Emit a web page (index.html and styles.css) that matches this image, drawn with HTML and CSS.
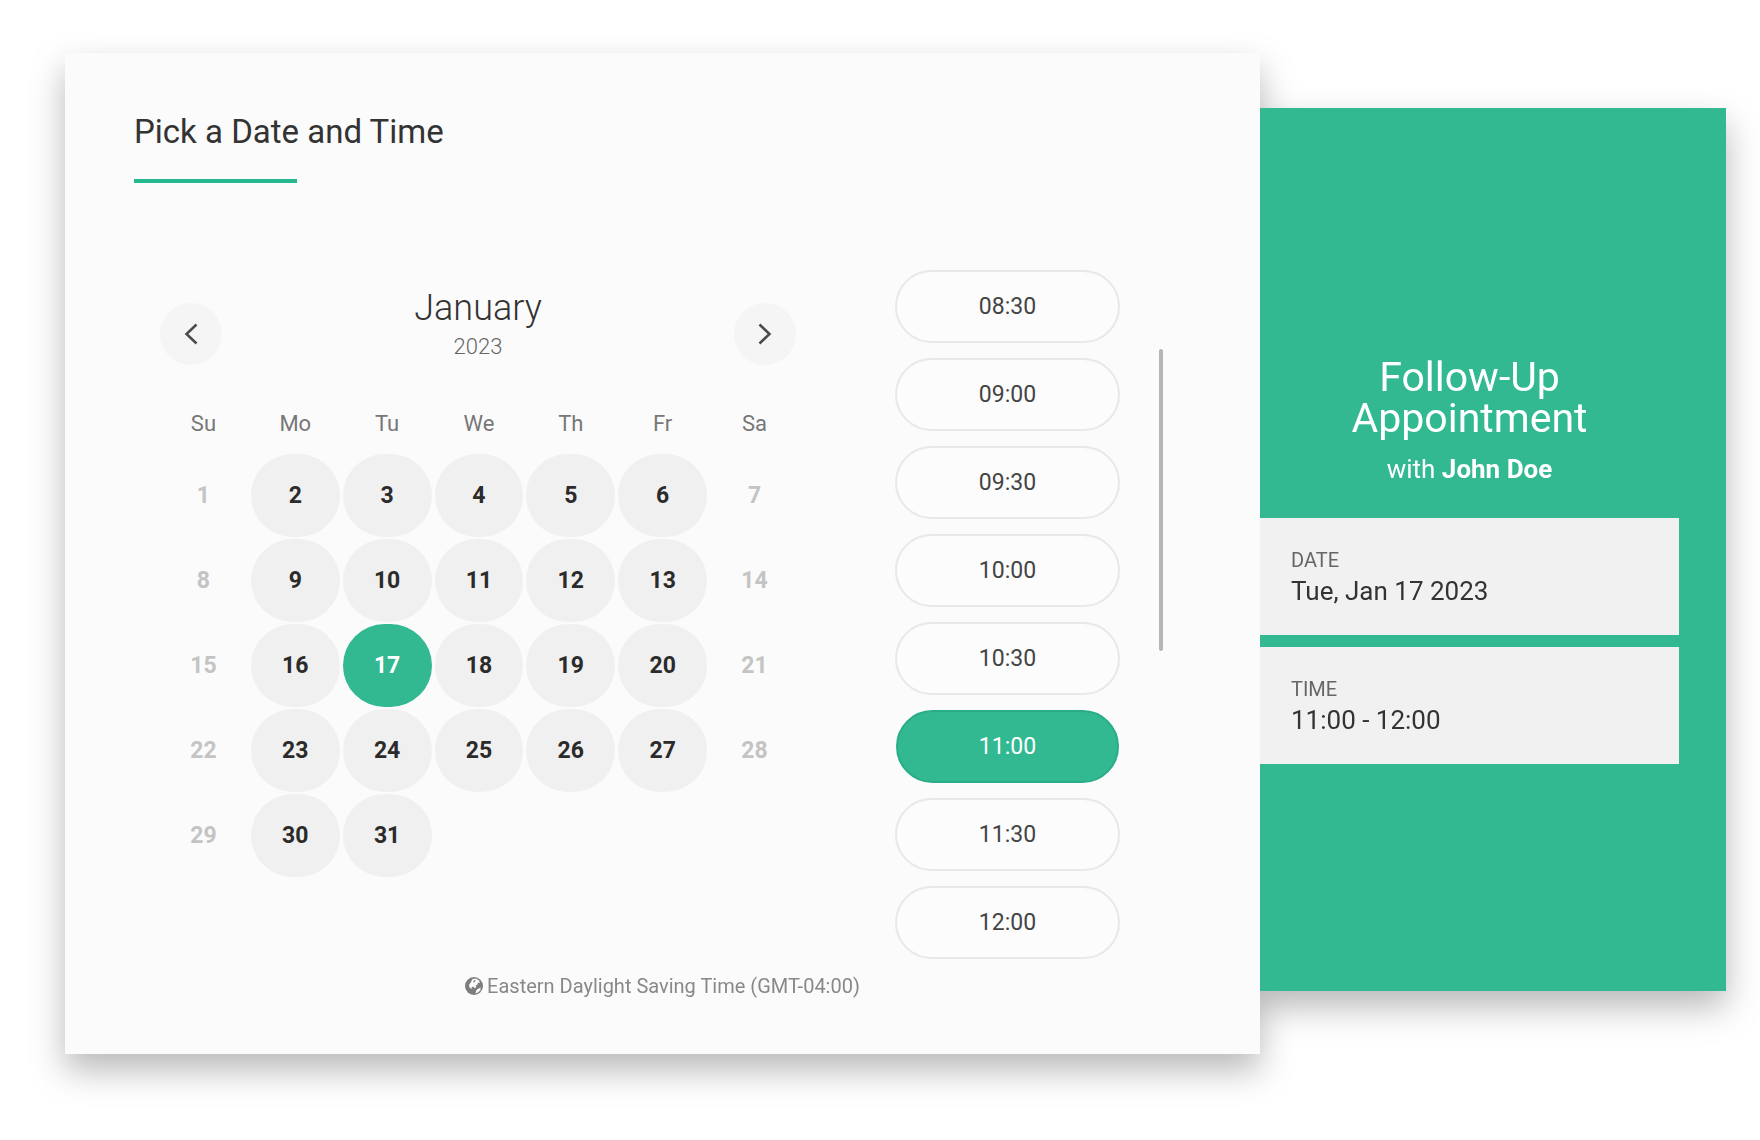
FILE: index.html
```
<!DOCTYPE html>
<html lang="en">
<head>
  <meta charset="UTF-8" />
  <meta name="viewport" content="width=device-width, initial-scale=1.0" />
  <title>Pick a Date and Time</title>
  <link rel="stylesheet" href="styles.css">
</head>
<body>
  <div class="booking">

    <!-- date and time picker -->
    <main class="picker">
      <h1>Pick a Date and Time</h1>

      <div class="picker-body">
        <section class="calendar">
          <div class="calendar-header">
            <button class="nav-btn" aria-label="Previous month">
              <svg width="14" height="22" viewBox="0 0 14 22"><path d="M12.500 1.500 L2.500 11 L12.500 20.500"/></svg>
            </button>
            <div class="calendar-title">
              <div class="month">January</div>
              <div class="year">2023</div>
            </div>
            <button class="nav-btn" aria-label="Next month">
              <svg width="14" height="22" viewBox="0 0 14 22"><path d="M1.500 1.500 L11.500 11 L1.500 20.500"/></svg>
            </button>
          </div>

          <table class="days">
            <thead>
              <tr><th>Su</th><th>Mo</th><th>Tu</th><th>We</th><th>Th</th><th>Fr</th><th>Sa</th></tr>
            </thead>
            <tbody>
              <tr>
                <td><button disabled>1</button></td>
                <td><button>2</button></td>
                <td><button>3</button></td>
                <td><button>4</button></td>
                <td><button>5</button></td>
                <td><button>6</button></td>
                <td><button disabled>7</button></td>
              </tr>
              <tr>
                <td><button disabled>8</button></td>
                <td><button>9</button></td>
                <td><button>10</button></td>
                <td><button>11</button></td>
                <td><button>12</button></td>
                <td><button>13</button></td>
                <td><button disabled>14</button></td>
              </tr>
              <tr>
                <td><button disabled>15</button></td>
                <td><button>16</button></td>
                <td><button class="selected">17</button></td>
                <td><button>18</button></td>
                <td><button>19</button></td>
                <td><button>20</button></td>
                <td><button disabled>21</button></td>
              </tr>
              <tr>
                <td><button disabled>22</button></td>
                <td><button>23</button></td>
                <td><button>24</button></td>
                <td><button>25</button></td>
                <td><button>26</button></td>
                <td><button>27</button></td>
                <td><button disabled>28</button></td>
              </tr>
              <tr>
                <td><button disabled>29</button></td>
                <td><button>30</button></td>
                <td><button>31</button></td>
                <td></td>
                <td></td>
                <td></td>
                <td></td>
              </tr>
            </tbody>
          </table>
        </section>

        <section class="times">
          <button>08:30</button>
          <button>09:00</button>
          <button>09:30</button>
          <button>10:00</button>
          <button>10:30</button>
          <button class="selected">11:00</button>
          <button>11:30</button>
          <button>12:00</button>
        </section>
        <div class="scroll-thumb"></div>
      </div>

      <div class="timezone">
        <svg width="18" height="18" viewBox="0 0 18 18">
          <circle cx="9" cy="9" r="9" fill="#7d7d7d"/>
          <path fill="#fbfbfb" d="M7.500 2 L11 1.500 L14 3.500 L15 6 L13 5.500 L12.500 7.500 L10.500 8.500 L11.500 10 L9.500 11 L8 9.500 L6.500 10.500 L7 12 L4.500 10.500 L4 8 L6 5 Z"/>
          <path fill="#fbfbfb" d="M12 12.500 L15.500 10.500 L15.500 13 L13 15.500 L10.500 16.500 L11 14 Z"/>
          <path fill="#7d7d7d" d="M8.500 3.500 L10.500 3 L10 5 L8.500 5.500 Z"/>
        </svg>
        Eastern Daylight Saving Time (GMT-04:00)
      </div>
    </main>

    <!-- appointment summary -->
    <aside class="summary">
      <h2>Follow-Up<br>Appointment</h2>
      <p class="host">with <strong>John Doe</strong></p>
      <div class="info">
        <div class="label">DATE</div>
        <div class="value">Tue, Jan 17 2023</div>
      </div>
      <div class="info">
        <div class="label">TIME</div>
        <div class="value">11:00 - 12:00</div>
      </div>
    </aside>

  </div>
</body>
</html>
```

FILE: styles.css
```
* {
  box-sizing: border-box;
}
body {
  margin: 0;
  padding: 53px 34px 86px 65px;
  font-family: Roboto, sans-serif;
  background: #fff;
  color: #333;
}
button {
  padding: 0;
  border: none;
  font-family: inherit;
  cursor: pointer;
}
.booking {
  display: grid;
  grid-template-columns: 1195fr 466fr;
  filter: drop-shadow(0 16px 17px rgba(0,0,0,0.28));
}

/* picker */
.picker {
  padding: 59px 69px 54px;
  background: #fbfbfb;
}
h1 {
  margin: 0;
  font-size: 33px;
  line-height: 40px;
  font-weight: 400;
  color: #333;
}
h1::after {
  content: '';
  display: block;
  width: 163px;
  height: 4px;
  margin-top: 27px;
  background: #26b88f;
}
.picker-body {
  display: flex;
  margin-top: 87px;
  padding: 0 28px 0 22px;
}
.calendar {
  flex: 1;
}
.calendar-header {
  display: flex;
  justify-content: space-between;
  align-items: flex-end;
  margin-top: 17px;
  padding: 0 6px 0 4px;
}
.calendar-title {
  text-align: center;
}
.month {
  font-size: 36px;
  line-height: 42px;
  font-weight: 300;
}
.year {
  font-size: 22px;
  line-height: 36px;
  font-weight: 300;
  color: #666;
}
.nav-btn {
  display: flex;
  align-items: center;
  justify-content: center;
  width: 62px;
  height: 62px;
  border-radius: 50%;
  background: #f5f5f5;
}
.nav-btn svg {
  fill: none;
  stroke: #4a4a4a;
  stroke-width: 2.5;
}
.days {
  width: 100%;
  margin-top: 27px;
  table-layout: fixed;
  border-spacing: 3px 2px;
}
.days th {
  height: 58px;
  padding: 0;
  font-size: 22px;
  font-weight: 400;
  color: #777;
}
.days td {
  padding: 0;
}
.days button {
  display: block;
  width: 100%;
  height: 83px;
  border-radius: 42px;
  background: #f0f0f0;
  font-size: 23px;
  font-weight: 700;
  color: #2b2b2b;
}
.days button:disabled {
  background: none;
  color: #c4c4c4;
  cursor: default;
}
.days button.selected {
  background: #32b992;
  color: #fff;
}

/* time slots */
.times {
  flex: 0 0 225px;
  display: flex;
  flex-direction: column;
  gap: 15px;
  margin-left: 93px;
}
.times button {
  height: 73px;
  border: 2px solid #e8e8e8;
  border-radius: 37px;
  background: #fcfcfc;
  font-size: 23px;
  color: #444;
}
.times button.selected {
  margin: 0 1px;
  border-color: #28ad86;
  background: #32b992;
  color: #fff;
}
.scroll-thumb {
  width: 4px;
  height: 302px;
  margin: 79px 0 0 39px;
  border-radius: 2px;
  background: #b5b5b5;
}
.timezone {
  display: flex;
  align-items: center;
  justify-content: center;
  gap: 4px;
  margin-top: 13px;
  font-size: 20px;
  line-height: 28px;
  color: #888;
}

/* summary */
.summary {
  margin: 55px 0 63px;
  padding: 249px 47px 0 0;
  background: #32b992;
}
.summary h2 {
  margin: 0;
  font-size: 41px;
  line-height: 41px;
  font-weight: 400;
  text-align: center;
  color: #fff;
}
.host {
  margin: 13px 0 32px;
  font-size: 26px;
  line-height: 34px;
  text-align: center;
  color: #fff;
}
.info {
  padding: 28px 31px 27px;
  background: #f1f1f1;
}
.info + .info {
  margin-top: 12px;
}
.label {
  font-size: 20px;
  line-height: 28px;
  color: #666;
}
.value {
  font-size: 26px;
  line-height: 34px;
}
```
